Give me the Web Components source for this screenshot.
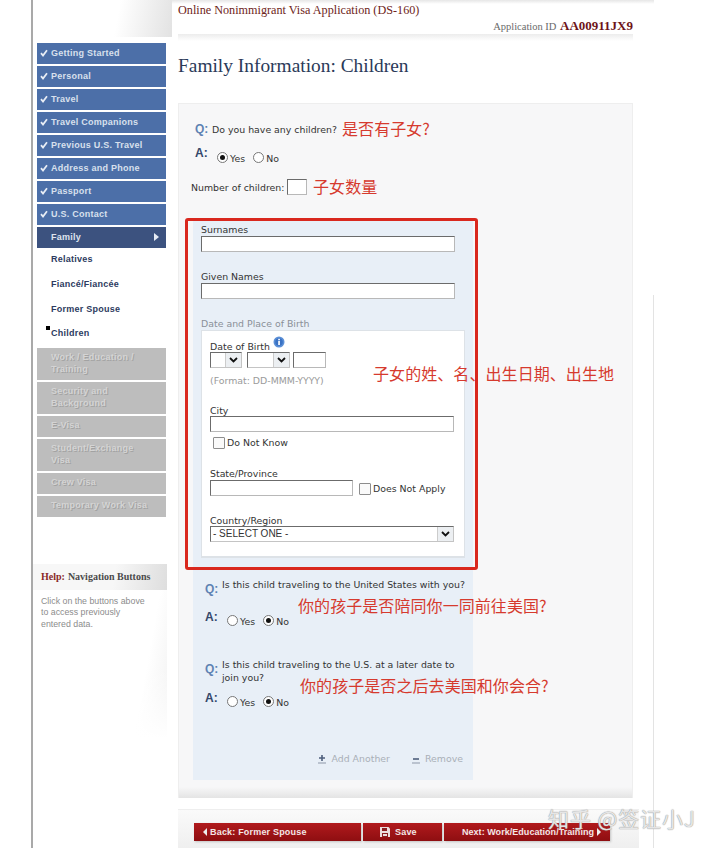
<!DOCTYPE html>
<html lang="en">
<head>
<meta charset="utf-8">
<title>DS-160 Family Information: Children</title>
<style>
  html, body { margin: 0; padding: 0; background: #fff; }
  body { width: 712px; height: 848px; overflow: hidden; position: relative; }
</style>
</head>
<body>
<ds-shell>
  <ds-nav slot="side">
    <ds-nav-item state="done">Getting Started</ds-nav-item>
    <ds-nav-item state="done">Personal</ds-nav-item>
    <ds-nav-item state="done">Travel</ds-nav-item>
    <ds-nav-item state="done">Travel Companions</ds-nav-item>
    <ds-nav-item state="done">Previous U.S. Travel</ds-nav-item>
    <ds-nav-item state="done">Address and Phone</ds-nav-item>
    <ds-nav-item state="done">Passport</ds-nav-item>
    <ds-nav-item state="done">U.S. Contact</ds-nav-item>
    <ds-nav-item state="current">Family</ds-nav-item>
    <ds-nav-item state="sub">Relatives</ds-nav-item>
    <ds-nav-item state="sub">Fiancé/Fiancée</ds-nav-item>
    <ds-nav-item state="sub">Former Spouse</ds-nav-item>
    <ds-nav-item state="active">Children</ds-nav-item>
    <ds-nav-item state="off">Work / Education / Training</ds-nav-item>
    <ds-nav-item state="off">Security and Background</ds-nav-item>
    <ds-nav-item state="off">E-Visa</ds-nav-item>
    <ds-nav-item state="off">Student/Exchange Visa</ds-nav-item>
    <ds-nav-item state="off">Crew Visa</ds-nav-item>
    <ds-nav-item state="off">Temporary Work Visa</ds-nav-item>
  </ds-nav>
  <ds-help slot="side" topic="Navigation Buttons">Click on the buttons above to access previously entered data.</ds-help>

  <ds-header app-id="AA00911JX9" heading="Family Information: Children">Online Nonimmigrant Visa Application (DS-160)</ds-header>

  <ds-panel>
    <ds-question style="margin-top:15px;margin-left:16px" q="Do you have any children?" answer="Yes"></ds-question>
    <ds-count style="margin:8px 0 0 12px">Number of children:</ds-count>
    <ds-group>
      <ds-field label="Surnames" width="254" style="margin-top:6px"></ds-field>
      <ds-field label="Given Names" width="254" style="margin-top:19px"></ds-field>
      <ds-birth></ds-birth>
      <ds-question inset style="margin-top:21px" q="Is this child traveling to the United States with you?" answer="No"></ds-question>
      <ds-question inset style="margin-top:31px" q="Is this child traveling to the U.S. at a later date to join you?" answer="No"></ds-question>
      <ds-add-remove></ds-add-remove>
    </ds-group>
  </ds-panel>

  <ds-footer-bar>
    <ds-button dir="back" width="167">Back: Former Spouse</ds-button>
    <ds-button dir="save" width="79">Save</ds-button>
    <ds-button dir="next" width="166">Next: Work/Education/Training</ds-button>
  </ds-footer-bar>
</ds-shell>

<ds-mark style="left:185px;top:218px;width:287px;height:346px"></ds-mark>
<ds-note style="left:342px;top:117px">是否有子女?</ds-note>
<ds-note style="left:313px;top:175px">子女数量</ds-note>
<ds-note style="left:373px;top:362px">子女的姓、名、出生日期、出生地</ds-note>
<ds-note style="left:298px;top:594px">你的孩子是否陪同你一同前往美国?</ds-note>
<ds-note style="left:300px;top:674px">你的孩子是否之后去美国和你会合?</ds-note>
<ds-watermark style="left:548px;top:805px">知乎 @签证小J</ds-watermark>

<script>
// small helper so each class only has to hand over its css and markup
function shadow(el, css, html) {
  el.attachShadow({ mode: 'open' }).innerHTML = `<style>${css}</style>${html}`;
}

const VERDANA = '"DejaVu Sans", sans-serif';
const ARIAL = '"Liberation Sans", Arial, sans-serif';
const TIMES = '"Liberation Serif", "Times New Roman", serif';
const CJK = '"Noto Sans CJK SC", "Noto Sans", sans-serif';

const CHEVRON = `<svg width="9" height="6" viewBox="0 0 9 6"><path d="M1 1l3.5 3.5L8 1" fill="none" stroke="#111" stroke-width="1.8"/></svg>`;

class DsShell extends HTMLElement {
  connectedCallback() {
    shadow(this, `
      :host {
        display: block;
        margin-left: 31px;
        width: 623px;
        height: 848px;
        box-sizing: border-box;
        border-left: 2px solid #a9a9a9;
        background:
          linear-gradient(#e6e6e6, #fff) 0 0 / 100% 4px no-repeat,
          linear-gradient(#e3e3e3, #e3e3e3) right 295px / 1px 100% no-repeat;
      }
      .wrap { display: flex; }
      .side { width: 145px; flex: none; }
      .side-top { width: 139px; height: 37px; background: linear-gradient(100deg, #fff 60%, #e2e2e2 100%); }
      .main { width: 455px; flex: none; }
    `, `
      <div class="wrap">
        <div class="side"><div class="side-top"></div><slot name="side"></slot></div>
        <div class="main"><slot></slot></div>
      </div>`);
  }
}

class DsNav extends HTMLElement {
  connectedCallback() {
    shadow(this, `:host { display: block; margin: 6px 0 0 4px; width: 129px; }`, `<slot></slot>`);
  }
}

class DsNavItem extends HTMLElement {
  connectedCallback() {
    const state = this.getAttribute('state');
    const check = state === 'done'
      ? `<svg class="ic" width="8" height="8" viewBox="0 0 8 8"><path d="M1 4.2l2 2.3L7 1.2" fill="none" stroke="#e8edf5" stroke-width="1.8"/></svg>` : '';
    const arrow = state === 'current'
      ? `<svg class="arr" width="5" height="8" viewBox="0 0 5 8"><path d="M0 0l5 4-5 4z" fill="#e6ebf4"/></svg>` : '';
    const bullet = state === 'active' ? `<span class="bullet"></span>` : '';
    shadow(this, `
      :host {
        display: block;
        font: bold 9px/12px ${ARIAL};
        letter-spacing: .25px;
        position: relative;
        box-sizing: border-box;
      }
      .row { display: flex; align-items: center; padding: 0 0 2px 14px; box-sizing: border-box; }
      .ic { position: absolute; left: 3px; top: 6px; }
      .arr { position: absolute; right: 7px; top: 6px; }
      .bullet { position: absolute; left: 9px; top: 4px; width: 4px; height: 4px; background: #000; }
      :host([state=done]) { margin-bottom: 2px; }
      :host([state=done]) .row { height: 21px; background: #4c6fa8; color: #d8e0ed; }
      :host([state=current]) .row { height: 21px; background: #3c527f; color: #dfe4ee; }
      :host([state=sub]) .row, :host([state=active]) .row { height: 24.7px; color: #2d3b60; }
      :host([state=active]) { margin-bottom: 1px; }
      :host([state=off]) { margin-bottom: 2px; }
      :host([state=off]) .row {
        min-height: 21px; padding: 3px 14px 5px 14px;
        background: #bdbdbd; color: #d4d4d4;
        text-shadow: 1px 1px 0 #a2a2a2;
      }
    `, `${check}${arrow}${bullet}<div class="row"><span><slot></slot></span></div>`);
  }
}

class DsHelp extends HTMLElement {
  connectedCallback() {
    shadow(this, `
      :host { display: block; margin-top: 47px; width: 134px; height: 174px;
        background:
          linear-gradient(to bottom, transparent 60%, #fff 100%),
          linear-gradient(100deg, #fff 80%, #f1f1f1 100%); }
      .t { height: 26px; padding-left: 8px; display: flex; align-items: center;
        font: bold 10px ${TIMES}; color: #4b4b4b;
        background: linear-gradient(100deg, #f7f7f7 60%, #dedede 100%); }
      .t b { color: #8a2a28; margin-right: 3px; }
      .b { padding: 6px 8px 0; font: 8.8px/11.5px ${ARIAL}; color: #8c8c8c; width: 108px; }
    `, `<div class="t"><b>Help:</b>${this.getAttribute('topic')}</div><div class="b"><slot></slot></div>`);
  }
}

class DsHeader extends HTMLElement {
  connectedCallback() {
    shadow(this, `
      :host { display: block; height: 103px; }
      .top { height: 34px; box-sizing: border-box; padding-top: 3px; position: relative; font-family: ${TIMES}; }
      .name { font-size: 12.2px; line-height: 15px; color: #6e2420; }
      .id { position: absolute; right: 0; top: 19px; font-size: 10.5px; line-height: 14px; color: #6a6a6a; }
      .id b { font-size: 13px; color: #6e1418; margin-left: 1px; }
      .band { height: 7px; background: linear-gradient(#ececec, #fff); }
      h1 { margin: 14px 0 0; font: normal 19.4px/22px ${TIMES}; color: #2b3a59; }
    `, `
      <div class="top">
        <div class="name"><slot></slot></div>
        <div class="id">Application ID <b>${this.getAttribute('app-id')}</b></div>
      </div>
      <div class="band"></div>
      <h1>${this.getAttribute('heading')}</h1>`);
  }
}

class DsPanel extends HTMLElement {
  connectedCallback() {
    shadow(this, `
      :host {
        display: block; height: 695px; box-sizing: border-box; overflow: hidden;
        border: 1px solid #eeeeee; border-width: 1px 1px 0 1px;
        background: linear-gradient(#f7f7f8 98.4%, #e4e4e4 100%);
      }
    `, `<slot></slot>`);
  }
}

class DsRadio extends HTMLElement {
  connectedCallback() {
    shadow(this, `
      :host { display: inline-flex; align-items: center; font: 9.4px ${VERDANA}; color: #333; margin-right: 8px; }
      i { display: inline-block; width: 11px; height: 11px; box-sizing: border-box; margin-right: 2px;
        border: 1px solid #777; border-radius: 50%; position: relative; background: #fff; top: -1px; }
      :host([checked]) i::after { content: ""; position: absolute; left: 2px; top: 2px; width: 5px; height: 5px;
        border-radius: 50%; background: #111; }
    `, `<i></i><span><slot></slot></span>`);
  }
}

class DsQuestion extends HTMLElement {
  connectedCallback() {
    const yes = this.getAttribute('answer') === 'Yes';
    shadow(this, `
      :host { display: block; font-family: ${VERDANA}; }
      .q { display: flex; min-height: 20px; align-items: center; }
      .l { font: bold 12px ${ARIAL}; }
      .q .l { color: #5f82b3; width: 17px; flex: none; }
      .a .l { color: #34476b; width: 22px; flex: none; margin-top: -9px; }
      .t { font-size: 9.4px; line-height: 13px; color: #333; }
      .a { display: flex; align-items: center; height: 25px; margin-top: 6px; }
      .opts { margin-top: 1px; }
      :host([inset]) { padding-left: 12px; width: 262px; }
      :host([inset]) .q { align-items: flex-start; min-height: 24px; }
      :host([inset]) .q .l { margin-top: 3px; }
      :host([inset]) .t { margin-top: -1px; }
      :host([inset]) .a { height: 20px; margin-top: 5px; }
      :host([inset]) .a .l { margin-top: -2px; }
      :host([inset]) .opts { margin-top: 6px; }
    `, `
      <div class="q"><span class="l">Q:</span><span class="t">${this.getAttribute('q')}</span></div>
      <div class="a"><span class="l">A:</span><span class="opts">
        <ds-radio ${yes ? 'checked' : ''}>Yes</ds-radio><ds-radio ${yes ? '' : 'checked'}>No</ds-radio>
      </span></div>`);
  }
}

class DsInput extends HTMLElement {
  connectedCallback() {
    const w = this.getAttribute('width');
    shadow(this, `
      :host { display: block; flex: none; width: ${w}px; height: 16px; }
      input { display: block; width: 100%; height: 100%; box-sizing: border-box; margin: 0; padding: 0;
        background: #fff; border: 1px solid; border-color: #6b6b6b #b8b8b8 #b8b8b8 #6b6b6b; outline: none; }
    `, `<input type="text">`);
  }
}

class DsCount extends HTMLElement {
  connectedCallback() {
    shadow(this, `
      :host { display: flex; align-items: center; font: 9.4px ${VERDANA}; color: #333; height: 18px; }
      ds-input { margin-left: 3px; }
    `, `<slot></slot><ds-input width="20"></ds-input>`);
  }
}

class DsGroup extends HTMLElement {
  connectedCallback() {
    shadow(this, `
      :host { display: block; margin: 22px 0 0 14px; width: 280px; height: 562px; background: #e8eff7;
        overflow: hidden; box-sizing: border-box; }
    `, `<slot></slot>`);
  }
}

class DsField extends HTMLElement {
  connectedCallback() {
    shadow(this, `
      :host { display: block; padding-left: 8px; font: 9.4px/12px ${VERDANA}; color: #333; }
      label { display: block; }
    `, `<label>${this.getAttribute('label')}</label><ds-input width="${this.getAttribute('width')}"></ds-input>`);
  }
}

class DsSelect extends HTMLElement {
  connectedCallback() {
    const w = this.getAttribute('width');
    shadow(this, `
      :host { display: flex; flex: none; width: ${w}px; height: 16px; box-sizing: border-box; position: relative;
        background: #fff; border: 1px solid; border-color: #6b6b6b #c4c4c4 #c4c4c4 #6b6b6b;
        font: 10px/14px ${ARIAL}; color: #333; padding-left: 2px; }
      .b { position: absolute; right: 0; top: 0; bottom: 0; width: 15px; background: #eceff2;
        border-left: 1px solid #ccc; display: flex; align-items: center; justify-content: center; }
    `, `<slot></slot><span class="b">${CHEVRON}</span>`);
  }
}

class DsBirth extends HTMLElement {
  connectedCallback() {
    shadow(this, `
      :host { display: block; padding-left: 8px; font: 9.4px/12px ${VERDANA}; color: #333; }
      .legend { margin-top: 19px; color: #8a9097; }
      .box { margin-top: 0; width: 264px; height: 228px; box-sizing: border-box; padding: 10px 0 0 8px;
        background: #fff; border: 1px solid #dde2e7; border-bottom-width: 2px; }
      .dob { position: relative; }
      .info { position: absolute; left: 63px; top: -5px; }
      .row { display: flex; align-items: center; }
      .dates { margin-top: -1px; }
      .fmt { margin-top: 7px; color: #9a9a9a; }
      .gap { margin-top: 18px; }
      .gap2 { margin-top: 19px; }
      .up { margin-top: -1px; }
      .ck { display: inline-flex; align-items: center; }
      .ck i { width: 12px; height: 12px; box-sizing: border-box; border: 1px solid #8d8d8d; background: #fafafa;
        border-radius: 1px; margin-right: 2px; }
      .dk { margin: 5px 0 0 3px; height: 12px; }
      .dna { margin: 2px 0 0 6px; }
    `, `
      <div class="legend">Date and Place of Birth</div>
      <div class="box">
        <div class="dob">Date of Birth
          <svg class="info" width="12" height="12" viewBox="0 0 12 12">
            <circle cx="6" cy="6" r="5.5" fill="#5b8fd6"/><circle cx="6" cy="6" r="3.8" fill="#3a72c4"/>
            <rect x="5.2" y="5" width="1.7" height="4" fill="#fff"/><rect x="5.2" y="2.8" width="1.7" height="1.5" fill="#fff"/>
          </svg>
        </div>
        <div class="row dates"><ds-select width="32"></ds-select><ds-select width="43" style="margin-left:5px"></ds-select><ds-input width="33" style="margin-left:3px"></ds-input></div>
        <div class="fmt">(Format: DD-MMM-YYYY)</div>
        <div class="gap">City</div>
        <ds-input class="up" width="244"></ds-input>
        <div class="dk"><span class="ck"><i></i>Do Not Know</span></div>
        <div class="gap2">State/Province</div>
        <div class="row"><ds-input width="143"></ds-input><span class="ck dna"><i></i>Does Not Apply</span></div>
        <div class="gap2">Country/Region</div>
        <ds-select class="up" width="244">- SELECT ONE -</ds-select>
      </div>`);
  }
}

class DsAddRemove extends HTMLElement {
  connectedCallback() {
    shadow(this, `
      :host { display: flex; justify-content: flex-end; margin-top: 44px; padding-right: 10px;
        font: 9.4px/12px ${VERDANA}; color: #aab0b8; }
      span { display: inline-flex; align-items: center; }
      svg { margin-right: 5px; }
      .rm { margin-left: 22px; }
    `, `
      <span><svg width="8" height="10" viewBox="0 0 8 10"><path d="M4 1v6M1 4h6" stroke="#4e5f7c" stroke-width="1.6"/><path d="M0 9h8" stroke="#8d97a8"/></svg>Add Another</span>
      <span class="rm"><svg width="8" height="10" viewBox="0 0 8 10"><path d="M1 5h6" stroke="#4e5f7c" stroke-width="1.6"/><path d="M0 9h8" stroke="#8d97a8"/></svg>Remove</span>`);
  }
}

class DsFooterBar extends HTMLElement {
  connectedCallback() {
    shadow(this, `
      :host { display: flex; gap: 2px; width: 461px; height: 39px; margin-top: 11px; box-sizing: border-box;
        padding: 13px 0 0 16px; background: linear-gradient(#fafafa, #efefef); border-top: 1px solid #eee; }
    `, `<slot></slot>`);
  }
}

class DsButton extends HTMLElement {
  connectedCallback() {
    const dir = this.getAttribute('dir');
    const left = `<svg width="4" height="8" viewBox="0 0 4 8"><path d="M4 0L0 4l4 4z" fill="#eee"/></svg>`;
    const right = `<svg width="4" height="8" viewBox="0 0 4 8"><path d="M0 0l4 4-4 4z" fill="#eee"/></svg>`;
    const disk = `<svg width="10" height="10" viewBox="0 0 10 10"><path d="M0 0h8.5L10 1.5V10H0z" fill="#ecdede"/><path d="M2 1h5v3H2z" fill="#8c1f22"/><path d="M2 6h6v4H2z" fill="#8c1f22"/><path d="M3 7h4v2H3z" fill="#ecdede"/></svg>`;
    shadow(this, `
      :host { display: flex; align-items: center; gap: 3px; flex: none;
        width: ${this.getAttribute('width')}px; height: 18px; box-sizing: border-box; box-shadow: 1px 1px 2px #c4c4c4;
        background: linear-gradient(#b11a1d, #8e0e11); color: #f4e6e6;
        font: bold 9px ${ARIAL}; letter-spacing: .19px; white-space: nowrap; }
      :host([dir=back]) { padding-left: 9px; }
      :host([dir=save]) { padding-left: 17px; gap: 5px; }
      :host([dir=next]) { justify-content: flex-end; padding-right: 9px; letter-spacing: .04px; }
    `, `${dir === 'back' ? left : ''}${dir === 'save' ? disk : ''}<slot></slot>${dir === 'next' ? right : ''}`);
  }
}

// the red notes and the frame were drawn over the screenshot, so they sit over the form
class DsMark extends HTMLElement {
  connectedCallback() {
    shadow(this, `:host { display: block; position: absolute; border: 3px solid #d9281e; border-radius: 3px; }`, ``);
  }
}

class DsNote extends HTMLElement {
  connectedCallback() {
    shadow(this, `
      :host { display: block; position: absolute; white-space: nowrap;
        font: 400 16px/22px ${CJK}; letter-spacing: .07px; color: #d63a2e; }
    `, `<slot></slot>`);
  }
}

class DsWatermark extends HTMLElement {
  connectedCallback() {
    shadow(this, `
      :host { display: block; position: absolute; white-space: nowrap;
        font: 21px/26px ${CJK}; color: rgba(255,255,255,.75);
        text-shadow: 0 0 1px #999, 0 0 1px #999; letter-spacing: .9px; }
    `, `<slot></slot>`);
  }
}

customElements.define('ds-shell', DsShell);
customElements.define('ds-nav', DsNav);
customElements.define('ds-nav-item', DsNavItem);
customElements.define('ds-help', DsHelp);
customElements.define('ds-header', DsHeader);
customElements.define('ds-panel', DsPanel);
customElements.define('ds-radio', DsRadio);
customElements.define('ds-question', DsQuestion);
customElements.define('ds-input', DsInput);
customElements.define('ds-count', DsCount);
customElements.define('ds-group', DsGroup);
customElements.define('ds-field', DsField);
customElements.define('ds-select', DsSelect);
customElements.define('ds-birth', DsBirth);
customElements.define('ds-add-remove', DsAddRemove);
customElements.define('ds-footer-bar', DsFooterBar);
customElements.define('ds-button', DsButton);
customElements.define('ds-mark', DsMark);
customElements.define('ds-note', DsNote);
customElements.define('ds-watermark', DsWatermark);
</script>
</body>
</html>
